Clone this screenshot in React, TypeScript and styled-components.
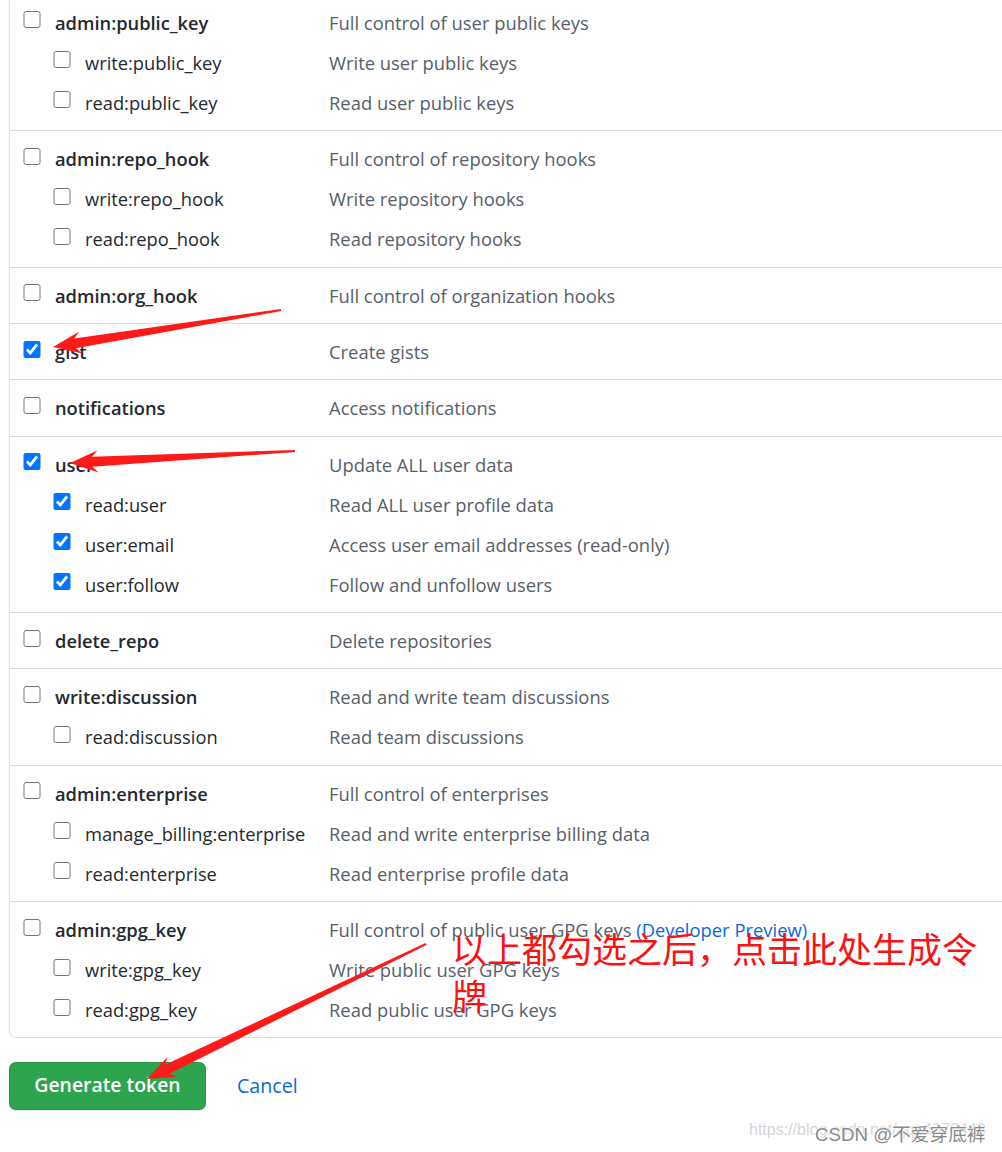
import React from "react";
import styled, { createGlobalStyle } from "styled-components";

const GlobalStyle = createGlobalStyle`
  html, body { margin: 0; padding: 0; background: #ffffff; }
  body { overflow: hidden; font-family: "Open Sans", "Noto Sans", sans-serif; }
  * { box-sizing: border-box; }
`;

const Page = styled.div`
  position: relative;
  width: 1002px;
  height: 1152px;
  overflow: hidden;
  background: #fff;
`;

const Box = styled.div`
  margin: -6.2px 0 0 9px;
  width: 1012px;
  border: 1px solid #d8dee4;
  border-radius: 7px;
`;

const Group = styled.div`
  padding: 7.68px 0;
  & + & { border-top: 1px solid #d8dee4; }
`;

const Row = styled.div`
  display: grid;
  grid-template-columns: 319px 1fr;
  height: 40px;
  align-items: center;
`;

const Label = styled.label<{ $sub?: boolean }>`
  display: flex;
  align-items: center;
  padding-left: ${(p) => (p.$sub ? 43 : 13)}px;
  font-size: 18.3px;
  font-weight: ${(p) => (p.$sub ? 400 : 600)};
  color: #24292f;
  white-space: nowrap;
`;

const Check = styled.input`
  width: 18px;
  height: 17px;
  margin: -5px 14px 0 0;
  flex: none;
`;

const Desc = styled.div`
  font-size: 18.4px;
  color: #57606a;
  white-space: nowrap;
`;

const Link = styled.span`
  color: #0969da;
`;

const Footer = styled.div`
  display: flex;
  align-items: center;
  margin: 23.5px 0 0 9px;
`;

const GreenButton = styled.button`
  width: 197px;
  height: 48px;
  border-radius: 7px;
  border: 1px solid rgba(27, 31, 36, 0.15);
  background: #2da44e;
  color: #ffffff;
  font-family: "Open Sans", "Noto Sans", sans-serif;
  font-size: 19.4px;
  font-weight: 600;
  padding: 0 0 2px;
  box-shadow: 0 1px 0 rgba(27, 31, 36, 0.1);
`;

const Cancel = styled.span`
  margin-left: 31px;
  font-size: 19.6px;
  font-weight: 500;
  color: #0969da;
  padding-bottom: 1px;
`;

const Overlay = styled.svg`
  position: absolute;
  left: 0;
  top: 0;
  pointer-events: none;
`;

const Note = styled.div`
  position: absolute;
  left: 452px;
  top: 924px;
  width: 545px;
  font-family: "Noto Sans CJK SC", sans-serif;
  font-size: 35px;
  line-height: 47px;
  color: #ff1010;
`;

const Watermark = styled.div`
  position: absolute;
  left: 749px;
  top: 1121px;
  display: flex;
  align-items: center;
  white-space: nowrap;
  font-family: "Liberation Sans", Arial, sans-serif;
`;

const WmUrl = styled.span`
  font-size: 16px;
  color: #d4d4d4;
`;

const WmName = styled.span`
  position: absolute;
  left: 66px;
  top: -2px;
  font-family: "Liberation Sans", "Noto Sans CJK SC", sans-serif;
  font-size: 18.7px;
  color: #8a8a8a;
  text-shadow: 0 0 2px #fff, 0 0 3px #fff, 0 0 4px #fff;
`;

type Item = { name: string; desc: React.ReactNode; checked?: boolean };
type GroupData = { main: Item; subs?: Item[] };

const data: GroupData[] = [
  {
    main: { name: "admin:public_key", desc: "Full control of user public keys" },
    subs: [
      { name: "write:public_key", desc: "Write user public keys" },
      { name: "read:public_key", desc: "Read user public keys" },
    ],
  },
  {
    main: { name: "admin:repo_hook", desc: "Full control of repository hooks" },
    subs: [
      { name: "write:repo_hook", desc: "Write repository hooks" },
      { name: "read:repo_hook", desc: "Read repository hooks" },
    ],
  },
  { main: { name: "admin:org_hook", desc: "Full control of organization hooks" } },
  { main: { name: "gist", desc: "Create gists", checked: true } },
  { main: { name: "notifications", desc: "Access notifications" } },
  {
    main: { name: "user", desc: "Update ALL user data", checked: true },
    subs: [
      { name: "read:user", desc: "Read ALL user profile data", checked: true },
      { name: "user:email", desc: "Access user email addresses (read-only)", checked: true },
      { name: "user:follow", desc: "Follow and unfollow users", checked: true },
    ],
  },
  { main: { name: "delete_repo", desc: "Delete repositories" } },
  {
    main: { name: "write:discussion", desc: "Read and write team discussions" },
    subs: [{ name: "read:discussion", desc: "Read team discussions" }],
  },
  {
    main: { name: "admin:enterprise", desc: "Full control of enterprises" },
    subs: [
      { name: "manage_billing:enterprise", desc: "Read and write enterprise billing data" },
      { name: "read:enterprise", desc: "Read enterprise profile data" },
    ],
  },
  {
    main: {
      name: "admin:gpg_key",
      desc: (
        <>
          Full control of public user GPG keys <Link>(Developer Preview)</Link>
        </>
      ),
    },
    subs: [
      { name: "write:gpg_key", desc: "Write public user GPG keys" },
      { name: "read:gpg_key", desc: "Read public user GPG keys" },
    ],
  },
];

function ScopeRow({ item, sub }: { item: Item; sub?: boolean }) {
  return (
    <Row>
      <Label $sub={sub}>
        <Check type="checkbox" defaultChecked={!!item.checked} />
        {item.name}
      </Label>
      <Desc>{item.desc}</Desc>
    </Row>
  );
}

type Pt = [number, number];

function arrowPoints(tail: Pt, tip: Pt, headLen: number, headHalf: number, shaftHalf: number, tailHalf: number): string {
  const dx = tip[0] - tail[0];
  const dy = tip[1] - tail[1];
  const len = Math.hypot(dx, dy);
  const ux = dx / len;
  const uy = dy / len;
  const nx = -uy;
  const ny = ux;
  const bx = tip[0] - ux * headLen;
  const by = tip[1] - uy * headLen;
  const nbx = tip[0] - ux * (headLen * 0.8);
  const nby = tip[1] - uy * (headLen * 0.8);
  const pts: Pt[] = [
    [tail[0] + nx * tailHalf, tail[1] + ny * tailHalf],
    [nbx + nx * shaftHalf, nby + ny * shaftHalf],
    [bx + nx * headHalf, by + ny * headHalf],
    tip,
    [bx - nx * headHalf, by - ny * headHalf],
    [nbx - nx * shaftHalf, nby - ny * shaftHalf],
    [tail[0] - nx * tailHalf, tail[1] - ny * tailHalf],
  ];
  return pts.map((p) => `${p[0].toFixed(1)},${p[1].toFixed(1)}`).join(" ");
}

export default function App() {
  return (
    <Page>
      <GlobalStyle />
      <Box>
        {data.map((g) => (
          <Group key={g.main.name}>
            <ScopeRow item={g.main} />
            {g.subs?.map((s) => <ScopeRow key={s.name} item={s} sub />)}
          </Group>
        ))}
      </Box>
      <Footer>
        <GreenButton type="button">Generate token</GreenButton>
        <Cancel>Cancel</Cancel>
      </Footer>

      <Overlay width={1002} height={1152} viewBox="0 0 1002 1152">
        <polygon points={arrowPoints([281, 310], [53, 347], 28, 11, 5, 1)} fill="#ff1a1a" />
        <polygon points={arrowPoints([295, 451], [70, 463], 28, 11, 5, 1)} fill="#ff1a1a" />
        <polygon points={arrowPoints([426, 944], [147, 1079], 28, 11, 5, 1)} fill="#ff1a1a" />
      </Overlay>

      <Note>以上都勾选之后，点击此处生成令牌</Note>

      <Watermark>
        <WmUrl>https://blog.csdn.net/qq_4378443</WmUrl>
        <WmName>CSDN @不爱穿底裤</WmName>
      </Watermark>
    </Page>
  );
}
